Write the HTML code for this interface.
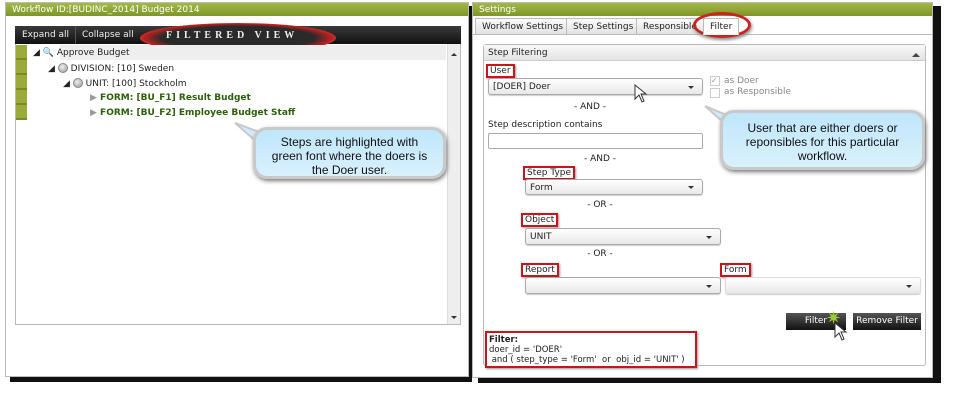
<!DOCTYPE html>
<html><head><meta charset="utf-8"><style>
*{box-sizing:border-box;margin:0;padding:0}
body{width:960px;height:401px;background:#fff;font-family:"DejaVu Sans","Liberation Sans",sans-serif;font-size:9px;color:#222;position:relative;overflow:hidden}
.a{position:absolute}
.hdr{background:linear-gradient(#a4b845,#7e9526);color:#fff;font-size:9px;padding:2px 6px;height:13px;line-height:10px}
.dd{position:absolute;border:1px solid #aaa;border-radius:3px;background:linear-gradient(#fff,#e8e8e8);font-size:9px;padding:3px 4px;box-shadow:0 1px 1px #ccc}
.dd:after{content:"";position:absolute;right:8px;top:50%;border:3px solid transparent;border-top:3px solid #333;margin-top:-1px}
.rb{position:absolute;border:2px solid #c8151b;padding:0 2px;font-size:9px;background:#fff;box-shadow:1px 1px 2px #999}
.call{position:absolute;border-radius:14px;background:linear-gradient(#bfe6fb,#d9f1fd);border:3px solid #c9c9c9;box-shadow:1px 2px 4px #777;font-family:"Liberation Sans",sans-serif;font-size:12px;text-align:center;line-height:14px;color:#111}
.ctr{position:absolute;text-align:center;font-size:9px}
.tab{position:absolute;top:18px;height:17px;border:1px solid #bbb;background:linear-gradient(#fafafa,#e2e2e2);font-size:9px;padding:3px 6px}
.row{position:absolute;font-size:9px}
.g{color:#2c5f0a;font-weight:bold}
.btn{position:absolute;background:linear-gradient(#555,#111);color:#fff;font-size:9px;text-align:center;line-height:17px;height:17px}
.ci{display:inline-block;width:10px;height:10px;border-radius:50%;background:radial-gradient(circle at 40% 35%,#eee,#999);border:1px solid #888;vertical-align:-2px}
</style></head><body>
<!-- left panel -->
<div class="a" style="left:10px;top:6px;width:462px;height:376px;background:#111"></div>
<div class="a" style="left:5px;top:2px;width:464px;height:375px;border:1px solid #bbb;background:#fff"></div>
<div class="a hdr" style="left:6px;top:3px;width:462px">Workflow ID:[BUDINC_2014] Budget 2014</div>
<div class="a" style="left:15px;top:26px;width:446px;height:18px;background:linear-gradient(#3a3a3a,#111)"></div>
<div class="a" style="left:22px;top:30px;color:#eee;font-size:9px">Expand all</div>
<div class="a" style="left:75px;top:26px;width:1px;height:18px;background:#555"></div>
<div class="a" style="left:82px;top:30px;color:#eee;font-size:9px">Collapse all</div>
<div class="a" style="left:140px;top:23px;width:196px;height:30px;border-radius:50%;background:radial-gradient(ellipse,#2a2a2a 55%,#b22 68%,#e44 75%,#fff0 78%)"></div>
<div class="a" style="left:166px;top:30px;color:#eee;font-size:10px;font-weight:bold;letter-spacing:4px;font-family:'Liberation Serif',serif">FILTERED VIEW</div>
<div class="a" style="left:15px;top:44px;width:446px;height:281px;border:1px solid #bbb;border-top:none"></div>
<div class="a" style="left:447px;top:44px;width:13px;height:280px;background:#eee;border-left:1px solid #ddd"></div>
<div class="a" style="left:451px;top:50px;border:3px solid transparent;border-bottom:3px solid #333"></div>
<div class="a" style="left:451px;top:316px;border:3px solid transparent;border-top:3px solid #333"></div>
<div class="a" style="left:16px;top:45px;width:11px;height:75px;background:repeating-linear-gradient(#9aab3a 0 13px,#7a8a25 13px 15px)"></div>
<div class="a" style="left:60px;top:45px;width:386px;height:15px;background:#eee"></div>
<div class="row" style="left:33px;top:48px">◢ 🔍&nbsp;Approve Budget</div>
<div class="row" style="left:48px;top:63px">◢ <span class="ci"></span> DIVISION: [10] Sweden</div>
<div class="row" style="left:63px;top:78px">◢ <span class="ci"></span> UNIT: [100] Stockholm</div>
<div class="row g" style="left:90px;top:93px"><span style="color:#999">▶</span> FORM: [BU_F1] Result Budget</div>
<div class="row g" style="left:90px;top:108px"><span style="color:#999">▶</span> FORM: [BU_F2] Employee Budget Staff</div>
<svg class="a" style="left:230px;top:115px" width="40" height="40"><path d="M5 8 L28 28 L32 18 Z" fill="#d0ecfb" stroke="#c9c9c9" stroke-width="2"/></svg>
<div class="call" style="left:253px;top:127px;width:193px;height:52px;padding-top:5px">Steps are highlighted with<br>green font where the doers is<br>the Doer user.</div>
<!-- right panel -->
<div class="a" style="left:478px;top:6px;width:463px;height:377px;background:#111"></div>
<div class="a" style="left:472px;top:2px;width:461px;height:376px;border:1px solid #bbb;background:#fff"></div>
<div class="a hdr" style="left:473px;top:3px;width:459px">Settings</div>
<div class="a" style="left:473px;top:34px;width:459px;height:1px;background:#bbb"></div>
<div class="tab" style="left:475px">Workflow Settings</div>
<div class="tab" style="left:566px">Step Settings</div>
<div class="tab" style="left:636px">Responsible</div>
<div class="a" style="left:693px;top:12px;width:58px;height:26px;border:3px solid #c22;border-radius:50%;box-shadow:1px 2px 3px #888"></div>
<div class="tab" style="left:703px;background:#fff;border-bottom-color:#fff">Filter</div>
<div class="a" style="left:483px;top:44px;width:443px;height:322px;border:1px solid #bbb;border-radius:3px"></div>
<div class="a" style="left:484px;top:45px;width:441px;height:16px;background:linear-gradient(#f8f8f8,#e4e4e4);border-bottom:1px solid #ccc;padding:3px 4px">Step Filtering</div>
<div class="a" style="left:912px;top:49px;border:4px solid transparent;border-bottom:4px solid #444"></div>
<div class="rb" style="left:486px;top:64px">User</div>
<div class="dd" style="left:488px;top:78px;width:215px;height:17px">[DOER] Doer</div>
<div class="a" style="left:710px;top:76px;width:10px;height:10px;border:1px solid #ccc;color:#999;font-size:8px;line-height:8px">✓</div>
<div class="a" style="left:724px;top:76px;color:#888">as Doer</div>
<div class="a" style="left:710px;top:88px;width:10px;height:10px;border:1px solid #ccc"></div>
<div class="a" style="left:724px;top:87px;color:#888">as Responsible</div>
<svg class="a" style="left:634px;top:84px" width="16" height="22"><path d="M1 1 L1 15 L5 11 L8 18 L10 17 L7 10 L12 10 Z" fill="#fff" stroke="#333"/></svg>
<div class="ctr" style="left:560px;top:102px;width:60px">- AND -</div>
<div class="a" style="left:488px;top:120px">Step description contains</div>
<div class="a" style="left:488px;top:133px;width:215px;height:16px;border:1px solid #aaa;border-radius:2px"></div>
<div class="ctr" style="left:570px;top:154px;width:60px">- AND -</div>
<svg class="a" style="left:700px;top:102px" width="60" height="40"><path d="M5 4 L40 35 L55 25 Z" fill="#d0ecfb" stroke="#c9c9c9" stroke-width="2"/></svg>
<div class="call" style="left:720px;top:110px;width:205px;height:60px;padding-top:8px">User that are either doers or<br>reponsibles for this particular<br>workflow.</div>
<div class="rb" style="left:523px;top:166px">Step Type</div>
<div class="dd" style="left:525px;top:179px;width:178px;height:16px">Form</div>
<div class="ctr" style="left:570px;top:200px;width:60px">- OR -</div>
<div class="rb" style="left:521px;top:213px">Object</div>
<div class="dd" style="left:525px;top:228px;width:196px;height:17px">UNIT</div>
<div class="ctr" style="left:570px;top:249px;width:60px">- OR -</div>
<div class="rb" style="left:521px;top:263px">Report</div>
<div class="rb" style="left:720px;top:263px">Form</div>
<div class="dd" style="left:525px;top:277px;width:196px;height:17px"></div>
<div class="dd" style="left:725px;top:277px;width:196px;height:17px;border-color:#ddd"></div>
<div class="btn" style="left:786px;top:313px;width:60px">Filter</div>
<div class="a" style="left:826px;top:310px;color:#9c3;font-size:18px;line-height:18px">✷</div>
<svg class="a" style="left:834px;top:322px" width="16" height="22"><path d="M1 1 L1 15 L5 11 L8 18 L10 17 L7 10 L12 10 Z" fill="#fff" stroke="#333"/></svg>
<div class="btn" style="left:853px;top:313px;width:68px">Remove Filter</div>
<div class="a" style="left:485px;top:331px;width:212px;height:37px;border:2px solid #c8151b;background:#fff;padding:2px;line-height:10px;font-size:8.5px;white-space:nowrap;box-shadow:1px 1px 2px #999"><b>Filter:</b><br>doer_id = 'DOER'<br>&nbsp;and ( step_type = 'Form'&nbsp; or&nbsp; obj_id = 'UNIT' )</div>
</body></html>
